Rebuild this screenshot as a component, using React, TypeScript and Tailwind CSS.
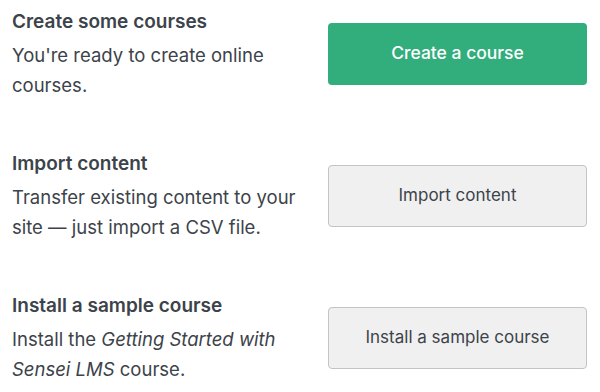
import React from "react";

const rows = [
  {
    title: "Create some courses",
    body: <>You're ready to create online courses.</>,
    button: "Create a course",
    primary: true,
  },
  {
    title: "Import content",
    body: <>Transfer existing content to your site — just import a CSV file.</>,
    button: "Import content",
    primary: false,
  },
  {
    title: "Install a sample course",
    body: (
      <>
        Install the <em>Getting Started with Sensei LMS</em> course.
      </>
    ),
    button: "Install a sample course",
    primary: false,
  },
];

export default function App() {
  return (
    <div
      className="w-[600px] h-[392px] bg-white overflow-hidden pl-[12px] pt-[7px] text-[#3c434a]"
      style={{ fontFamily: "Inter, 'Noto Sans', sans-serif" }}
    >
      <div className="flex flex-col gap-[49px]">
        {rows.map((r) => (
          <div key={r.title} className="flex items-center gap-[16px]">
            <div className="w-[300px]">
              <div className="text-[19px] leading-[30px] font-semibold mb-[3px]">{r.title}</div>
              <div className="text-[18.5px] leading-[30px]">{r.body}</div>
            </div>
            {r.primary ? (
              <button className="w-[259px] h-[62px] rounded-[4px] bg-[#32ae7c] text-white text-[17.5px] font-medium">
                {r.button}
              </button>
            ) : (
              <button className="w-[259px] h-[62px] rounded-[4px] bg-[#f0f0f1] border border-[#c3c4c7] text-[#3c434a] text-[17px]">
                {r.button}
              </button>
            )}
          </div>
        ))}
      </div>
    </div>
  );
}
